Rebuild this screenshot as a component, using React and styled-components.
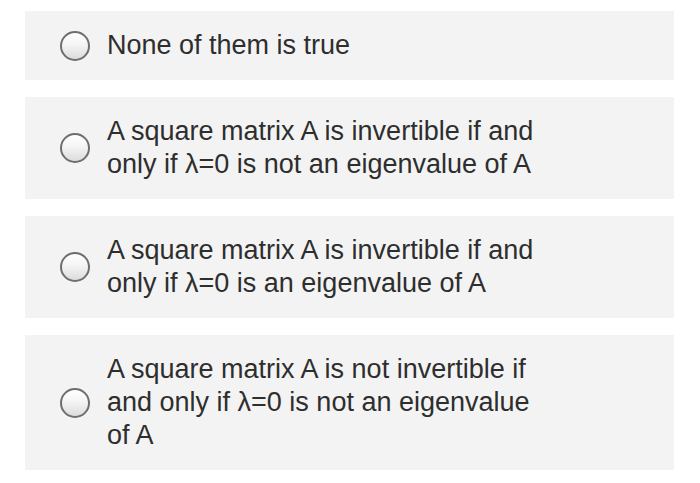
import React from "react";
import styled, { createGlobalStyle } from "styled-components";

const options = [
  "None of them is true",
  "A square matrix A is invertible if and only if λ=0 is not an eigenvalue of A",
  "A square matrix A is invertible if and only if λ=0 is an eigenvalue of A",
  "A square matrix A is not invertible if and only if λ=0 is not an eigenvalue of A",
];

const GlobalStyle = createGlobalStyle`
  html, body {
    margin: 0;
    padding: 0;
    background: #ffffff;
  }
  body {
    font-family: "Liberation Sans", Arial, Helvetica, sans-serif;
  }
`;

const Page = styled.div`
  display: flex;
  flex-direction: column;
  gap: 17px;
  padding: 11px 26px 0 25px;
`;

const OptionCard = styled.label`
  display: flex;
  align-items: center;
  gap: 17px;
  padding: 18px 20px 18px 35px;
  background: #f3f3f3;
  cursor: pointer;
`;

const Radio = styled.span`
  flex: none;
  width: 30px;
  height: 30px;
  box-sizing: border-box;
  border-radius: 50%;
  border: 2px solid #6e6e6e;
  background: linear-gradient(180deg, #ffffff 0%, #f4f4f4 45%, #dcdcdc 100%);
`;

const OptionText = styled.span`
  max-width: 445px;
  font-size: 27px;
  line-height: 33px;
  color: #2e2e2e;
`;

export default function App() {
  return (
    <>
      <GlobalStyle />
      <Page>
        {options.map((text, idx) => (
          <OptionCard key={idx}>
            <Radio />
            <OptionText>{text}</OptionText>
          </OptionCard>
        ))}
      </Page>
    </>
  );
}
